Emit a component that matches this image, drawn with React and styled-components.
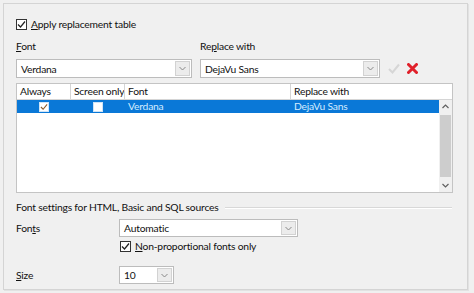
import React from 'react'
import styled, { createGlobalStyle } from 'styled-components'

const Global = createGlobalStyle`
  html, body {
    margin: 0;
    padding: 0;
    background: #f0f0f0;
  }
  body {
    font-family: Lato, "Noto Sans", sans-serif;
    font-size: 10.3px;
    letter-spacing: -0.2px;
    color: #111;
  }
`

const Page = styled.div`
  width: 474px;
  height: 293px;
  padding: 3px;
  box-sizing: border-box;
`

const Panel = styled.div`
  width: 465px;
  height: 287px;
  box-sizing: border-box;
  border: 1px solid #d4d4d4;
  box-shadow: 1px 1px 0 #e2e2e2;
  padding: 12px 15px 0 12px;
  display: flex;
  flex-direction: column;
`

const CheckRow = styled.label`
  display: flex;
  align-items: center;
  gap: 4px;
  height: 14px;
  margin-left: ${p => p.$indent || 0}px;
  margin-top: ${p => p.$top || 0}px;
`

const Box = styled.span`
  width: 11px;
  height: 11px;
  box-sizing: border-box;
  border: 1px solid #333;
  background: #fff;
  display: flex;
  align-items: center;
  justify-content: center;
`

const U = styled.span`
  text-decoration: underline;
  text-underline-offset: 1px;
`

const TopGrid = styled.div`
  display: grid;
  grid-template-columns: 176px 180px auto;
  column-gap: 8px;
  row-gap: 6px;
  margin-top: 9px;
  align-items: center;
`

const Label = styled.div`
  height: 13px;
  line-height: 13px;
`

const Combo = styled.div`
  height: ${p => p.$h || 19}px;
  width: ${p => p.$w ? p.$w + 'px' : 'auto'};
  box-sizing: border-box;
  border: 1px solid #bcbcbc;
  background: #fff;
  display: flex;
  align-items: center;
  padding-left: 4px;
`

const ComboText = styled.span`
  flex: 1;
`

const DropBtn = styled.span`
  width: 15px;
  height: ${p => p.$h - 4 || 15}px;
  margin-right: 1px;
  box-sizing: border-box;
  border: 1px solid #d2d2d2;
  background: #ececec;
  display: flex;
  align-items: center;
  justify-content: center;
`

const Actions = styled.div`
  display: flex;
  align-items: center;
  gap: 7px;
`

const Table = styled.div`
  margin-top: 5px;
  width: 437px;
  height: 110px;
  box-sizing: border-box;
  border: 1px solid #c4c4c4;
  background: #fff;
  display: flex;
  flex-direction: column;
`

const Columns = '54px 54px 166px 1fr'

const HeaderRow = styled.div`
  display: grid;
  grid-template-columns: ${Columns};
  height: 15px;
  border-bottom: 1px solid #d5d5d5;
`

const HeaderCell = styled.div`
  border-right: 1px solid #d5d5d5;
  padding-left: 3px;
  line-height: 15px;
  white-space: nowrap;
  overflow: hidden;
  &:last-child {
    border-right: none;
  }
`

const Body = styled.div`
  flex: 1;
  display: flex;
`

const Rows = styled.div`
  flex: 1;
`

const DataRow = styled.div`
  display: grid;
  grid-template-columns: ${Columns};
  height: 13px;
  background: #0a78d7;
  color: #d4ecff;
`

const DataCell = styled.div`
  display: flex;
  align-items: center;
  justify-content: ${p => p.$center ? 'center' : 'flex-start'};
  padding-left: ${p => p.$center ? 0 : 3}px;
  line-height: 13px;
`

const RowBox = styled.span`
  width: 10px;
  height: 10px;
  box-sizing: border-box;
  background: #fff;
  border: 1px solid #cfe4f7;
  display: flex;
  align-items: center;
  justify-content: center;
`

const Scroll = styled.div`
  width: 13px;
  background: #f0f0f0;
  display: flex;
  flex-direction: column;
  align-items: center;
`

const Arrow = styled.div`
  height: 13px;
  display: flex;
  align-items: center;
  justify-content: center;
`

const Thumb = styled.div`
  width: 11px;
  flex: 1;
  margin: 2px 0;
  background: #cdcdcd;
`

const Section = styled.div`
  display: flex;
  align-items: center;
  gap: 6px;
  margin-top: 7px;
  height: 14px;
`

const Rule = styled.div`
  flex: 1;
  height: 1px;
  background: #d8d8d8;
  box-shadow: 0 1px 0 #fff;
`

const FieldRow = styled.div`
  display: flex;
  align-items: center;
  margin-top: ${p => p.$top}px;
`

const FieldLabel = styled.div`
  width: 103px;
`

const Chevron = () => (
  <svg width="7" height="5" viewBox="0 0 7 5">
    <path d="M0.5 1 L3.5 4 L6.5 1" fill="none" stroke="#888" strokeWidth="1" />
  </svg>
)

const Tick = ({ color = '#222', size = 9 }) => (
  <svg width={size} height={size} viewBox="0 0 9 9">
    <path d="M1 4.5 L3.5 7 L8 1.5" fill="none" stroke={color} strokeWidth="1.2" />
  </svg>
)

const ComboBox = ({ w, h = 19, children }) => (
  <Combo $w={w} $h={h}>
    <ComboText>{children}</ComboText>
    <DropBtn $h={h}><Chevron /></DropBtn>
  </Combo>
)

export default function App() {
  return (
    <Page>
      <Global />
      <Panel>
        <CheckRow $top={1}>
          <Box><Tick /></Box>
          <span><U>A</U>pply replacement table</span>
        </CheckRow>

        <TopGrid>
          <Label><U>F</U>ont</Label>
          <Label>Re<U>p</U>lace with</Label>
          <span />
          <ComboBox>Verdana</ComboBox>
          <ComboBox>DejaVu Sans</ComboBox>
          <Actions>
            <svg width="12" height="11" viewBox="0 0 12 11">
              <path d="M1 6 L4.5 9.5 L11 1.5" fill="none" stroke="#d6d6d6" strokeWidth="2" />
            </svg>
            <svg width="11" height="11" viewBox="0 0 11 11">
              <path d="M1.5 1.5 L9.5 9.5 M9.5 1.5 L1.5 9.5" stroke="#e0202a" strokeWidth="3" strokeLinecap="round" />
            </svg>
          </Actions>
        </TopGrid>

        <Table>
          <HeaderRow>
            <HeaderCell>Always</HeaderCell>
            <HeaderCell>Screen only</HeaderCell>
            <HeaderCell>Font</HeaderCell>
            <HeaderCell>Replace with</HeaderCell>
          </HeaderRow>
          <Body>
            <Rows>
              <DataRow>
                <DataCell $center><RowBox><Tick color="#8a5a2a" size={8} /></RowBox></DataCell>
                <DataCell $center><RowBox /></DataCell>
                <DataCell>Verdana</DataCell>
                <DataCell>DejaVu Sans</DataCell>
              </DataRow>
            </Rows>
            <Scroll>
              <Arrow>
                <svg width="7" height="5" viewBox="0 0 7 5">
                  <path d="M0.5 4 L3.5 1 L6.5 4" fill="none" stroke="#606060" strokeWidth="1.2" />
                </svg>
              </Arrow>
              <Thumb />
              <Arrow>
                <svg width="7" height="5" viewBox="0 0 7 5">
                  <path d="M0.5 1 L3.5 4 L6.5 1" fill="none" stroke="#606060" strokeWidth="1.2" />
                </svg>
              </Arrow>
            </Scroll>
          </Body>
        </Table>

        <Section>
          <span>Font settings for HTML, Basic and SQL sources</span>
          <Rule />
        </Section>

        <FieldRow $top={5}>
          <FieldLabel>Fon<U>t</U>s</FieldLabel>
          <ComboBox w={179} h={18}>Automatic</ComboBox>
        </FieldRow>

        <CheckRow $indent={104} $top={2}>
          <Box><Tick /></Box>
          <span><U>N</U>on-proportional fonts only</span>
        </CheckRow>

        <FieldRow $top={13}>
          <FieldLabel><U>S</U>ize</FieldLabel>
          <ComboBox w={55} h={18}>10</ComboBox>
        </FieldRow>
      </Panel>
    </Page>
  )
}
